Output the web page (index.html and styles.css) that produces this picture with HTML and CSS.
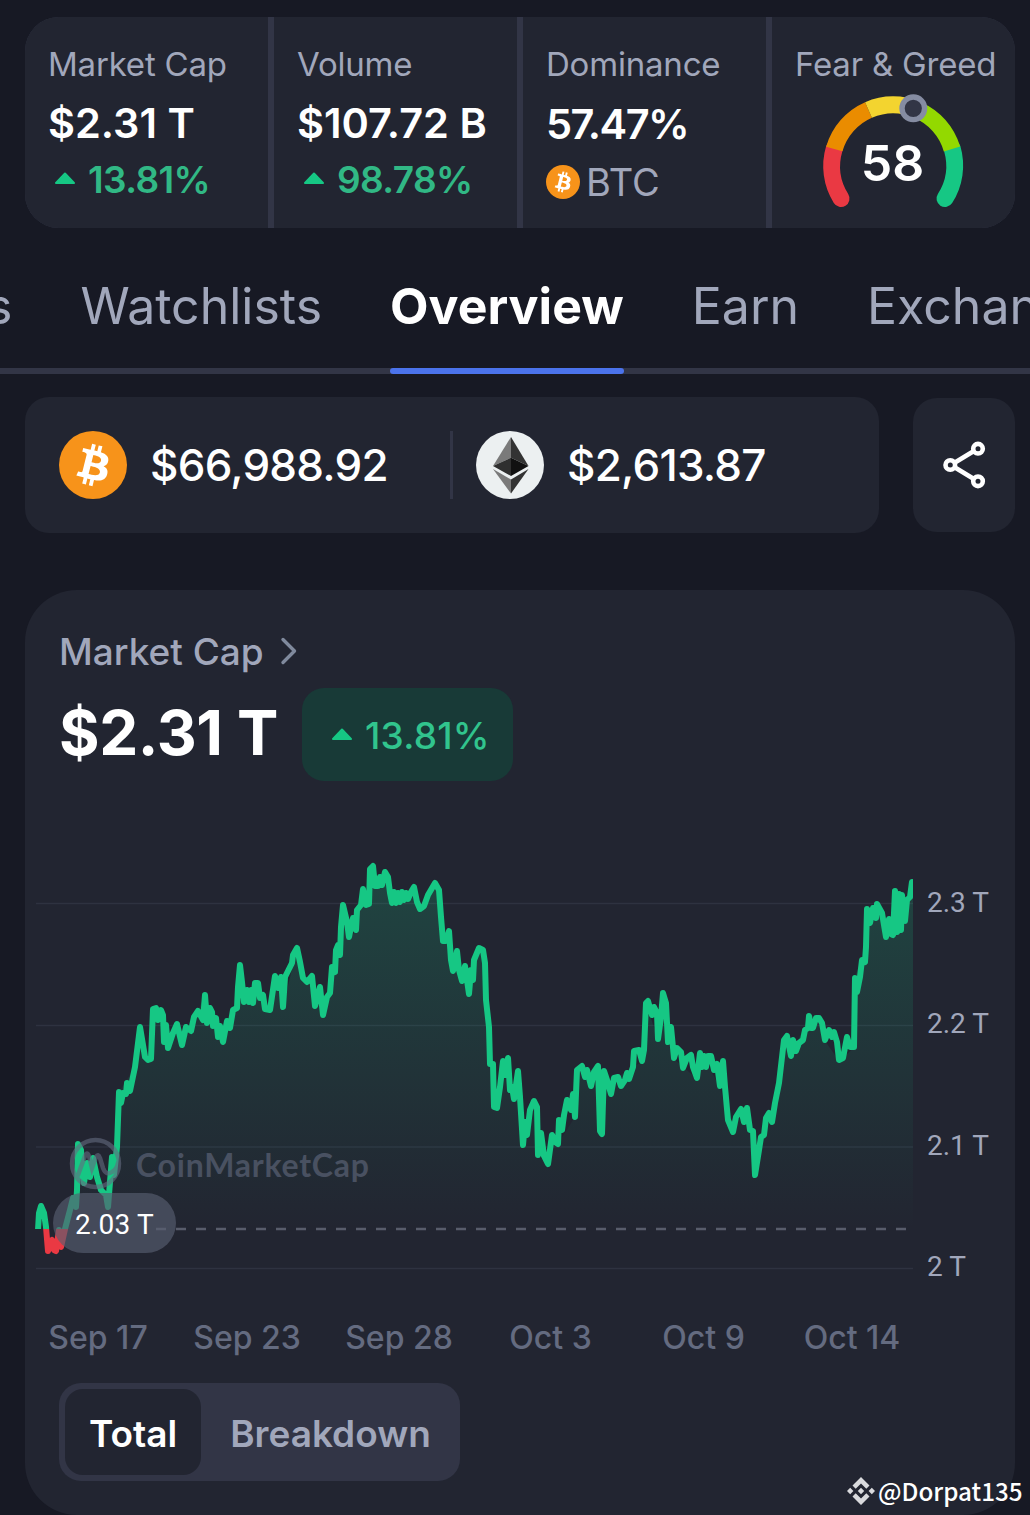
FILE: index.html
```html
<!DOCTYPE html>
<html lang="en">
<head>
    <meta charset="UTF-8">
    <meta name="viewport" content="width=device-width, initial-scale=1.0">
    <title>Market Overview</title>
    <link rel="stylesheet" href="styles.css">
</head>
<body>

    <!-- shared coin logo -->
    <svg class="sprite" width="0" height="0">
        <symbol id="btc" viewBox="0 0 32 32">
            <circle cx="16" cy="16" r="16" fill="#f7931a"/>
            <path fill="#fff" d="M23.189 14.02c.314-2.096-1.283-3.223-3.465-3.975l.708-2.84-1.728-.43-.69 2.765c-.454-.114-.92-.22-1.385-.326l.695-2.783L15.596 6l-.708 2.839c-.376-.086-.746-.17-1.104-.26l.002-.009-2.384-.595-.46 1.846s1.283.294 1.256.312c.7.175.826.638.805 1.006l-.806 3.235c.048.012.11.03.18.057l-.183-.045-1.13 4.532c-.086.212-.303.531-.793.41.018.025-1.256-.313-1.256-.313l-.858 1.978 2.25.561c.418.105.828.215 1.231.318l-.715 2.872 1.727.43.708-2.84c.472.127.93.245 1.378.357l-.706 2.828 1.728.43.715-2.866c2.948.558 5.164.333 6.097-2.333.752-2.146-.037-3.385-1.588-4.192 1.13-.26 1.98-1.003 2.207-2.538zm-3.95 5.538c-.533 2.147-4.148.986-5.32.695l.95-3.805c1.172.293 4.929.872 4.37 3.11zm.535-5.569c-.487 1.953-3.495.96-4.47.717l.86-3.45c.975.243 4.118.696 3.61 2.733z"/>
        </symbol>
        <symbol id="up" viewBox="0 0 22 14">
            <path d="M2 12L11 2.500L20 12Z" fill="#16c784" stroke="#16c784" stroke-width="2" stroke-linejoin="round"/>
        </symbol>
    </svg>

    <section class="stats">
        <div class="stat">
            <div class="stat-label">Market Cap</div>
            <div class="stat-value">$2.31 T</div>
            <div class="stat-change"><svg class="arrow"><use href="#up"/></svg>13.81%</div>
        </div>
        <div class="stat">
            <div class="stat-label">Volume</div>
            <div class="stat-value">$107.72 B</div>
            <div class="stat-change"><svg class="arrow"><use href="#up"/></svg>98.78%</div>
        </div>
        <div class="stat">
            <div class="stat-label">Dominance</div>
            <div class="stat-value dominance">57.47%</div>
            <div class="stat-coin"><svg class="coin-small"><use href="#btc"/></svg>BTC</div>
        </div>
        <div class="stat">
            <div class="stat-label">Fear &amp; Greed</div>
            <div class="gauge">
                <svg width="144" height="120" viewBox="821 92 144 120" fill="none" stroke-width="17">
                    <path d="M841 198.500A61 61 0 0 1 834.300 148.500" stroke="#ea3943" stroke-linecap="round"/>
                    <path d="M952.200 148.500A61 61 0 0 1 945 198.500" stroke="#16c784" stroke-linecap="round"/>
                    <path d="M834.300 149A61 61 0 0 1 868.500 110" stroke="#ea8c00"/>
                    <path d="M868.500 110A61 61 0 0 1 917.500 110" stroke="#f3d42f"/>
                    <path d="M917.500 110A61 61 0 0 1 952 149" stroke="#93d900"/>
                    <circle cx="913.300" cy="108.300" r="11.300" fill="#323546" stroke="#858ca2" stroke-width="5.400"/>
                </svg>
                <span class="gauge-value">58</span>
            </div>
        </div>
    </section>

    <nav class="tabs">
        <a class="tab">s</a>
        <a class="tab">Watchlists</a>
        <a class="tab active">Overview</a>
        <a class="tab">Earn</a>
        <a class="tab">Exchan</a>
    </nav>

    <section class="prices">
        <div class="ticker">
            <div class="price">
                <svg class="coin"><use href="#btc"/></svg>
                <span>$66,988.92</span>
            </div>
            <div class="price">
                <svg class="coin" viewBox="476.500 431 68 68">
                    <circle cx="510.500" cy="465" r="34" fill="#ecf0f1"/>
                    <path d="M511.500 437L493.500 466L511.500 457.700Z" fill="#7a7a7a"/>
                    <path d="M511.500 437L529 466L511.500 457.700Z" fill="#333"/>
                    <path d="M493.500 466L511.500 457.700V476Z" fill="#2f2f2f"/>
                    <path d="M529 466L511.500 457.700V476Z" fill="#111"/>
                    <path d="M493.500 469L511.500 479.500V493.500Z" fill="#7a7a7a"/>
                    <path d="M529 469L511.500 479.500V493.500Z" fill="#333"/>
                </svg>
                <span>$2,613.87</span>
            </div>
        </div>
        <button class="share">
            <svg width="48" height="52" viewBox="940 439 48 52" fill="none" stroke="#fff" stroke-width="4.600">
                <path d="M955 462.500L973.500 451.200M955 467.500L973.500 478.800"/>
                <circle cx="950.300" cy="465" r="4.800"/>
                <circle cx="978" cy="448.700" r="4.800"/>
                <circle cx="978" cy="481.300" r="4.800"/>
            </svg>
        </button>
    </section>

    <section class="card">
        <div class="card-label">
            Market Cap
            <svg class="chevron" width="18" height="28" viewBox="0 0 18 28" fill="none" stroke="#808a9d" stroke-width="3.400" stroke-linecap="round" stroke-linejoin="round"><path d="M3 2.500L14.500 14L3 25.500"/></svg>
        </div>
        <div class="card-total">
            <span class="total">$2.31 T</span>
            <span class="badge"><svg class="arrow"><use href="#up"/></svg>13.81%</span>
        </div>

        <svg class="chart" width="990" height="602" viewBox="25 781 990 602">
            <defs>
                <linearGradient id="fade" gradientUnits="userSpaceOnUse" x1="0" y1="864" x2="0" y2="1229">
                    <stop offset="0" stop-color="#16c784" stop-opacity="0.200"/>
                    <stop offset="1" stop-color="#16c784" stop-opacity="0"/>
                </linearGradient>
                <clipPath id="above"><rect x="30" y="840" width="883" height="389"/></clipPath>
                <clipPath id="below"><rect x="42" y="1229" width="871" height="50"/></clipPath>
                <path id="line" d="M38 1230L39 1213L41 1206L44 1213L46 1227L48 1251L50 1242L52 1240L54 1250L56 1251L59 1230L61 1247L65 1229L70 1210L73 1198L76 1207L77 1190L78 1144L81 1150L82 1170L84 1183L87 1163L90 1177L93 1158L97 1177L101 1190L106 1195L108 1207L112 1157L114 1175L117 1147L119 1092L121 1103L123 1093L126 1094L127 1083L130 1091L135 1067L140 1027L145 1057L148 1060L151 1059L153 1009L156 1008L158 1020L161 1010L163 1015L164 1042L166 1025L168 1048L173 1033L177 1024L182 1045L186 1027L191 1031L194 1017L198 1011L203 1020L205 995L207 1023L210 1008L212 1012L213 1026L216 1018L218 1037L220 1026L223 1042L227 1021L230 1028L233 1010L237 1008L238 987L240 965L242 982L244 1002L247 990L249 1002L251 990L253 1003L255 983L258 983L260 998L263 995L265 1009L270 1010L275 976L278 988L281 977L283 1007L285 977L287 973L292 963L293 955L297 948L300 962L303 978L307 982L312 976L315 1006L318 995L320 987L323 1015L327 997L330 993L332 967L335 972L336 950L338 945L340 955L341 927L343 905L347 922L349 937L353 918L356 930L357 910L361 905L363 889L366 905L369 904L370 869L373 866L375 886L378 886L380 877L382 885L385 872L388 877L390 893L392 903L394 892L396 903L398 893L400 902L402 892L404 900L406 893L408 899L411 892L414 887L417 902L420 909L424 906L428 895L435 883L439 890L441 917L443 941L446 941L449 931L451 960L453 971L457 951L459 970L462 981L465 966L469 994L471 970L473 980L474 960L479 948L483 950L485 963L486 1000L489 1027L490 1064L493 1064L494 1107L497 1108L500 1087L503 1061L505 1075L508 1058L510 1090L512 1087L514 1099L518 1071L520 1097L523 1145L525 1122L527 1135L530 1110L534 1101L537 1107L538 1155L541 1133L544 1156L548 1164L552 1135L555 1142L558 1144L559 1120L562 1130L564 1115L567 1100L571 1110L573 1094L575 1117L577 1070L582 1066L585 1077L587 1070L591 1086L594 1072L598 1066L600 1131L602 1134L604 1071L607 1080L611 1094L614 1078L618 1077L621 1086L625 1080L627 1073L629 1079L633 1067L634 1051L639 1050L642 1061L644 1050L646 1003L648 1001L652 1015L654 1007L657 1013L658 1039L661 1017L663 993L666 1003L668 1042L671 1027L674 1058L677 1048L681 1052L683 1068L687 1058L691 1055L693 1067L697 1078L700 1053L702 1067L704 1056L706 1067L708 1056L711 1056L714 1070L717 1064L720 1086L723 1061L725 1087L728 1120L733 1132L736 1117L741 1109L744 1122L747 1108L750 1130L753 1131L755 1175L759 1150L761 1137L764 1135L766 1118L769 1113L772 1122L775 1103L779 1083L784 1040L787 1036L791 1056L793 1040L796 1051L799 1043L803 1040L805 1030L808 1028L809 1016L811 1028L813 1028L816 1018L819 1018L822 1023L825 1040L829 1030L832 1037L834 1032L837 1042L839 1060L843 1058L847 1037L850 1047L854 1047L855 978L857 992L860 977L862 960L865 962L866 947L867 909L870 923L873 908L876 918L877 904L882 913L886 937L889 919L891 934L893 935L895 891L897 932L899 894L901 930L902 895L905 921L907 900L910 897L912 882"/>
            </defs>

            <g class="grid-lines">
                <path d="M36 903.500H913M36 1025.500H913M36 1147H913M36 1268.500H913"/>
            </g>

            <path fill="url(#fade)" clip-path="url(#above)" d="M65 1229L70 1210L77 1190L78 1143L84 1184L93 1158L108 1208L117 1147L119 1092L135 1067L140 1027L148 1061L153 1008L163 1015L169 1049L177 1024L182 1046L198 1011L205 994L224 1042L237 1008L240 964L247 1002L255 983L270 1010L275 976L283 1008L297 947L303 978L312 976L324 1016L332 967L341 927L343 904L349 938L356 931L363 889L369 905L370 868L375 887L385 871L393 903L414 887L420 910L435 882L439 890L443 942L449 931L453 971L457 951L469 995L479 947L485 963L489 1027L494 1108L503 1060L508 1057L514 1100L518 1071L523 1146L534 1101L538 1156L548 1165L552 1135L558 1144L575 1117L577 1070L582 1065L591 1087L598 1065L599 1132L603 1135L604 1071L612 1095L618 1077L633 1067L642 1062L646 1003L658 1040L663 992L668 1043L674 1059L697 1079L700 1052L720 1087L728 1120L733 1133L741 1109L753 1131L755 1176L761 1137L775 1103L784 1040L791 1057L809 1015L819 1017L825 1041L839 1061L854 1048L855 977L866 947L867 908L877 904L886 938L893 936L895 890L905 922L913 880V1229Z"/>

            <path class="base-line" d="M156 1229H907"/>
            <use href="#line" class="line" stroke="#16c784" clip-path="url(#above)"/>
            <use href="#line" class="line" stroke="#ea3943" clip-path="url(#below)"/>

            <g class="watermark">
                <circle cx="95.500" cy="1163.500" r="23.500"/>
                <path d="M78 1175L85 1156Q87 1151 89 1156L92 1168L96 1157Q98 1153 100 1158L103 1168Q106 1176 112 1172Q117 1169 118 1163"/>
                <text x="136" y="1177" textLength="233">CoinMarketCap</text>
            </g>

            <rect x="53" y="1193" width="123" height="60" rx="30" fill="#585d70" fill-opacity="0.650"/>
            <text class="base-value" x="75" y="1234">2.03 T</text>

            <g class="y-axis">
                <text x="927" y="912">2.3 T</text>
                <text x="927" y="1033">2.2 T</text>
                <text x="927" y="1155">2.1 T</text>
                <text x="927" y="1276">2 T</text>
            </g>
            <g class="x-axis">
                <text x="98" y="1349">Sep 17</text>
                <text x="247" y="1349">Sep 23</text>
                <text x="399" y="1349">Sep 28</text>
                <text x="550.500" y="1349">Oct 3</text>
                <text x="703.500" y="1349">Oct 9</text>
                <text x="852" y="1349">Oct 14</text>
            </g>
        </svg>

        <div class="toggle">
            <button class="toggle-btn selected">Total</button>
            <button class="toggle-btn">Breakdown</button>
        </div>
    </section>

    <div class="credit">
        <svg width="28" height="28" viewBox="0 0 28 28" fill="#d9dadd">
            <path d="M14 0L22.500 8.500L19.300 11.700L14 6.400L8.700 11.700L5.500 8.500Z"/>
            <path d="M14 28L22.500 19.500L19.300 16.300L14 21.600L8.700 16.300L5.500 19.500Z"/>
            <path d="M3.200 10.800L6.400 14L3.200 17.200L0 14ZM24.800 10.800L28 14L24.800 17.200L21.600 14ZM14 10.800L17.200 14L14 17.200L10.800 14Z"/>
        </svg>
        <span>@Dorpat135</span>
    </div>

</body>
</html>
```
FILE: styles.css
```css
body {
    font-family: Inter, 'Liberation Sans', sans-serif;
    margin: 0;
    padding: 17px 0 0;
    width: 1030px;
    height: 1515px;
    box-sizing: border-box;
    overflow: hidden;
    background-color: #171924;
    color: #fff;
}

button {
    border: none;
    padding: 0;
    font-family: inherit;
    color: inherit;
    cursor: pointer;
}

.sprite {
    display: block;
}

/* top stats */
.stats {
    display: grid;
    grid-template-columns: repeat(4, 243px);
    gap: 6px;
    height: 211px;
    margin: 0 15px 0 25px;
    border-radius: 34px;
    overflow: hidden;
    background-color: #323546;
}

.stat {
    padding: 20px 0 0 23px;
    background-color: #222531;
    white-space: nowrap;
}

.stat-label {
    font-size: 33px;
    line-height: 55px;
    letter-spacing: -0.2px;
    color: #a1a7bb;
}

.stat-value {
    font-size: 41.5px;
    font-weight: 600;
    line-height: 63px;
}

.stat-change {
    display: flex;
    align-items: center;
    font-size: 37px;
    font-weight: 600;
    line-height: 49px;
    letter-spacing: -0.6px;
    color: #31b885;
}

.arrow {
    width: 22px;
    height: 14px;
    margin: 0 12px 4px 5px;
}

.stat-change .arrow {
    margin-left: 6px;
}

.dominance {
    padding-top: 1px;
    letter-spacing: -1.5px;
}

.stat-coin {
    display: flex;
    align-items: center;
    gap: 6px;
    font-size: 38px;
    line-height: 52px;
    color: #a1a7bb;
}

.coin-small {
    width: 34px;
    height: 34px;
}

.gauge {
    position: relative;
    width: 144px;
    margin-left: 26px;
}

.gauge svg {
    display: block;
}

.gauge-value {
    position: absolute;
    top: 41px;
    left: 0;
    width: 143px;
    font-size: 50px;
    font-weight: 600;
    line-height: 60px;
    text-align: center;
}

/* tabs */
.tabs {
    display: flex;
    gap: 68px;
    height: 140px;
    margin-left: -14px;
    border-bottom: 6px solid #323546;
    white-space: nowrap;
}

.tab {
    font-size: 50px;
    line-height: 156px;
    height: 140px;
    color: #a1a7bb;
}

.tab.active {
    position: relative;
    color: #fff;
    font-weight: 700;
}

.tab.active::after {
    content: '';
    position: absolute;
    left: 0;
    right: 0;
    bottom: -6px;
    height: 6px;
    border-radius: 3px;
    background-color: #4b73eb;
}

/* prices */
.prices {
    display: flex;
    align-items: center;
    justify-content: space-between;
    margin: 23px 15px 0 25px;
}

.ticker {
    display: flex;
    align-items: center;
    width: 854px;
    height: 136px;
    border-radius: 24px;
    background-color: #222531;
}

.price {
    display: flex;
    align-items: center;
    gap: 23px;
    height: 68px;
    margin-left: 34px;
    font-size: 44px;
    font-weight: 500;
    letter-spacing: -0.75px;
}

.price:first-child {
    width: 391px;
    border-right: 3px solid #323546;
}

.price:last-child {
    margin-left: 23px;
}

.coin {
    width: 68px;
    height: 68px;
}

.share {
    display: flex;
    align-items: center;
    justify-content: center;
    width: 102px;
    height: 134px;
    border-radius: 24px;
    background-color: #222531;
}

/* market cap card */
.card {
    height: 925px;
    box-sizing: border-box;
    margin: 57px 15px 0 25px;
    padding-top: 31px;
    border-radius: 52px;
    background-color: #222531;
}

.card-label {
    display: flex;
    align-items: center;
    gap: 16px;
    margin-left: 34px;
    font-size: 37px;
    font-weight: 500;
    line-height: 62px;
    color: #a1a7bb;
}

.chevron {
    margin-bottom: 3px;
}

.card-total {
    display: flex;
    align-items: center;
    height: 93px;
    margin: 5px 0 0 34px;
}

.total {
    width: 243px;
    padding-bottom: 3px;
    font-size: 62px;
    font-weight: 700;
    line-height: 80px;
    letter-spacing: -0.4px;
    white-space: nowrap;
}

.badge {
    display: flex;
    align-items: center;
    width: 211px;
    height: 93px;
    padding: 2px 0 0 24px;
    box-sizing: border-box;
    border-radius: 22px;
    background-color: #183a37;
    color: #31c48d;
    font-size: 37px;
    font-weight: 500;
    letter-spacing: 0.2px;
}

/* chart */
.chart {
    display: block;
}

.grid-lines {
    stroke: #2e3240;
    stroke-width: 1.5;
}

.line {
    fill: none;
    stroke-width: 6;
    stroke-linejoin: round;
    stroke-linecap: round;
}

.base-line {
    fill: none;
    stroke: #585c6b;
    stroke-width: 2.5;
    stroke-dasharray: 10 10;
}

.watermark {
    fill: none;
    stroke: #646b80;
    stroke-width: 4.5;
    stroke-linecap: round;
    opacity: 0.6;
}

.watermark text {
    fill: #646b80;
    stroke: none;
    font-family: Lato, sans-serif;
    font-size: 32px;
    font-weight: 700;
}

.base-value {
    fill: #fff;
    font-family: Roboto, sans-serif;
    font-size: 28px;
    letter-spacing: 0.2px;
}

.y-axis {
    fill: #a1a7bb;
    font-family: Roboto, sans-serif;
    font-size: 28px;
}

.x-axis {
    fill: #646b80;
    font-size: 32px;
    font-weight: 500;
    text-anchor: middle;
}

/* total / breakdown switch */
.toggle {
    display: flex;
    width: 401px;
    height: 98px;
    box-sizing: border-box;
    margin-left: 34px;
    padding: 6px 0 6px 6px;
    border-radius: 22px;
    background-color: #323546;
}

.toggle-btn {
    flex: 1;
    border-radius: 18px;
    background-color: transparent;
    color: #a1a7bb;
    font-size: 37px;
    font-weight: 600;
    padding-top: 2px;
}

.toggle-btn.selected {
    flex: 0 0 136px;
    background-color: #222531;
    color: #fff;
}

.credit {
    position: absolute;
    left: 847px;
    top: 1471px;
    display: flex;
    align-items: center;
    gap: 3px;
    font-family: 'Noto Sans CJK SC', sans-serif;
    font-size: 24.2px;
    font-weight: 500;
    line-height: 40px;
}
```
